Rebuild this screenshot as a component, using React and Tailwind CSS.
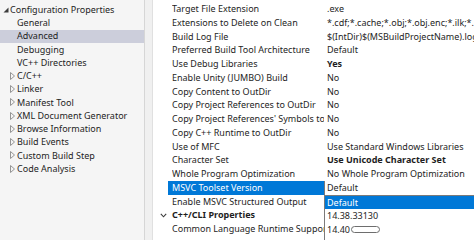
const tree = [
  { label: 'Configuration Properties', kind: 'open' },
  { label: 'General', kind: 'leaf' },
  { label: 'Advanced', kind: 'leaf', selected: true },
  { label: 'Debugging', kind: 'leaf' },
  { label: 'VC++ Directories', kind: 'leaf' },
  { label: 'C/C++', kind: 'closed' },
  { label: 'Linker', kind: 'closed' },
  { label: 'Manifest Tool', kind: 'closed' },
  { label: 'XML Document Generator', kind: 'closed' },
  { label: 'Browse Information', kind: 'closed' },
  { label: 'Build Events', kind: 'closed' },
  { label: 'Custom Build Step', kind: 'closed' },
  { label: 'Code Analysis', kind: 'closed' },
];

const props = [
  ['Target File Extension', '.exe'],
  ['Extensions to Delete on Clean', '*.cdf;*.cache;*.obj;*.obj.enc;*.ilk;*.ipdb;*.iobj'],
  ['Build Log File', '$(IntDir)$(MSBuildProjectName).log'],
  ['Preferred Build Tool Architecture', 'Default'],
  ['Use Debug Libraries', 'Yes', true],
  ['Enable Unity (JUMBO) Build', 'No'],
  ['Copy Content to OutDir', 'No'],
  ['Copy Project References to OutDir', 'No'],
  ["Copy Project References' Symbols to OutDir", 'No'],
  ['Copy C++ Runtime to OutDir', 'No'],
  ['Use of MFC', 'Use Standard Windows Libraries'],
  ['Character Set', 'Use Unicode Character Set', true],
  ['Whole Program Optimization', 'No Whole Program Optimization'],
];

function Triangle({ open }) {
  if (open) {
    return (
      <svg width="6" height="6" viewBox="0 0 6 6" className="shrink-0">
        <path d="M5.5 0.5 L5.5 5.5 L0.5 5.5 Z" fill="#3c3c3c" />
      </svg>
    );
  }
  return (
    <svg width="5" height="8" viewBox="0 0 5 8" className="shrink-0">
      <path d="M0.5 0.5 L4.5 4 L0.5 7.5 Z" fill="none" stroke="#8a8a8a" strokeWidth="0.9" />
    </svg>
  );
}

function TreeRow({ item }) {
  return (
    <div
      className={
        'flex h-[13.25px] items-center whitespace-nowrap ' +
        (item.selected ? 'bg-[#cccedb]' : '')
      }
    >
      {item.kind === 'open' && (
        <div className="flex w-[10px] justify-end pr-[1px]">
          <Triangle open />
        </div>
      )}
      {item.kind === 'closed' && (
        <div className="flex w-[17px] justify-start pl-[10px]">
          <Triangle />
        </div>
      )}
      {item.kind === 'leaf' && <div className="w-[17px]" />}
      <span>{item.label}</span>
    </div>
  );
}

function PropRow({ name, value, bold }) {
  return (
    <div className="flex h-[13.75px] items-center whitespace-nowrap">
      <div className="w-[19px] shrink-0" />
      <div className="w-[152px] shrink-0 overflow-hidden">{name}</div>
      <div className={'pl-[3px] ' + (bold ? 'font-bold' : '')}>{value}</div>
    </div>
  );
}

export default function App() {
  return (
    <div
      className="flex h-[240px] w-[474px] overflow-hidden bg-[#f0f0f0] text-[9px] text-[#1e1e1e]"
      style={{ fontFamily: '"Noto Sans", "Open Sans", sans-serif' }}
    >
      <div className="w-[145px] shrink-0 border-r border-[#d6d6d6] bg-[#f5f5f5] pt-[3px]">
        {tree.map((item) => (
          <TreeRow key={item.label} item={item} />
        ))}
      </div>
      <div className="ml-[7px] flex-1 border-l border-[#e0e0e0] bg-white pt-[2px]">
        {props.map(([n, v, b]) => (
          <PropRow key={n} name={n} value={v} bold={b} />
        ))}
        <div className="flex h-[13.75px] items-center whitespace-nowrap">
          <div className="w-[15px] shrink-0" />
          <div className="flex h-full w-[156px] shrink-0 items-center bg-[#0078d7] pl-[4px] text-white">
            MSVC Toolset Version
          </div>
          <div className="flex h-full flex-1 items-center border-l border-[#7a7a7a] bg-white pl-[2px]">
            Default
          </div>
        </div>
        <div className="relative flex h-[13.75px] items-center whitespace-nowrap">
          <div className="w-[19px] shrink-0" />
          <div className="w-[152px] shrink-0 overflow-hidden">Enable MSVC Structured Output</div>
          <div className="absolute left-[171px] top-0 w-[160px] border border-[#7a7a7a] bg-white">
            <div className="flex h-[13.5px] items-center bg-[#0078d7] pl-[2px] text-white">Default</div>
            <div className="flex h-[13.5px] items-center pl-[2px]">14.38.33130</div>
            <div className="flex h-[13.5px] items-center pl-[2px]">
              14.40
              <span className="ml-[1px] inline-block h-[7px] w-[29px] rounded-full border border-[#6e6e6e] bg-white" />
            </div>
            <div className="h-[12px]" />
          </div>
        </div>
        <div className="flex h-[13.75px] items-center whitespace-nowrap">
          <div className="flex w-[19px] shrink-0 justify-center pl-[1px]">
            <svg width="7" height="5" viewBox="0 0 7 5">
              <path d="M0.8 0.8 L3.5 3.8 L6.2 0.8" fill="none" stroke="#3c3c3c" strokeWidth="1.1" />
            </svg>
          </div>
          <div className="font-bold">C++/CLI Properties</div>
        </div>
        <div className="flex h-[13.75px] items-center whitespace-nowrap">
          <div className="w-[19px] shrink-0" />
          <div className="w-[152px] shrink-0 overflow-hidden">Common Language Runtime Support</div>
        </div>
      </div>
    </div>
  );
}
